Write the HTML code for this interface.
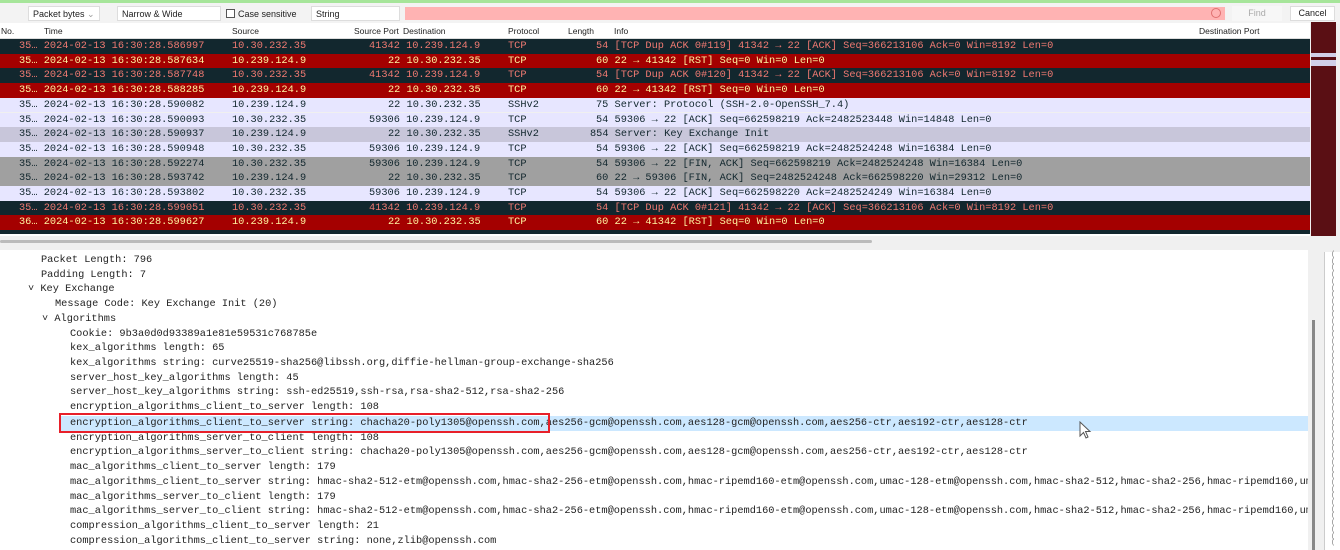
<!DOCTYPE html>
<html><head><meta charset="utf-8"><style>
*{margin:0;padding:0;box-sizing:border-box}
body{width:1340px;height:550px;overflow:hidden;background:#f0f0f0;font-family:"Liberation Sans",sans-serif;position:relative}
.mono{font-family:"Liberation Mono",monospace;font-size:10.3px}
.abs{position:absolute}
.sel{position:absolute;top:6px;height:15px;background:#fff;border:1px solid #ddd;font-size:9px;color:#222;padding:2px 4px;line-height:10px}
.row{position:absolute;left:0;width:1310px;height:14.7px;line-height:14.7px;white-space:pre}
.row span{position:absolute;top:0}
.d{background:#12272e;color:#f07a72}
.r{background:#a40000;color:#fff3a0}
.l{background:#e7e6ff;color:#12272e}
.s{background:#c8c6da;color:#12272e}
.g{background:#a0a0a0;color:#12272e}
.hd{position:absolute;top:25px;font-size:8.5px;color:#222}
.dl{position:absolute;white-space:pre;color:#222;height:14.7px;line-height:14.7px}
</style></head><body>
<div class="abs" style="left:0;top:0;width:1340px;height:3px;background:#a6e59a"></div>
<div class="abs" style="left:0;top:3px;width:1340px;height:21px;background:#f3f3f3"></div>
<div class="sel" style="left:28px;width:72px">Packet bytes <span style="color:#999">&#8964;</span></div>
<div class="sel" style="left:117px;width:104px">Narrow &amp; Wide</div>
<div class="abs" style="left:226px;top:9px;width:9px;height:9px;border:1px solid #555;background:#fff"></div>
<div class="abs" style="left:238px;top:9px;font-size:9px;color:#222">Case sensitive</div>
<div class="sel" style="left:311px;width:89px">String</div>
<div class="abs" style="left:405px;top:7px;width:820px;height:13px;background:#ffb3b3"></div>
<div class="abs" style="left:1211px;top:8px;width:10px;height:10px;border:1px solid #e07070;border-radius:50%"></div>
<div class="abs" style="left:1232px;top:6px;width:50px;height:15px;background:#f7f7f7;font-size:9px;color:#aaa;text-align:center;line-height:15px">Find</div>
<div class="abs" style="left:1290px;top:6px;width:45px;height:15px;background:#fff;border:1px solid #ddd;font-size:9px;color:#222;text-align:center;line-height:13px">Cancel</div>
<div class="abs" style="left:0;top:23px;width:1310px;height:16px;background:#fff;border-bottom:1px solid #ddd"></div>
<div class="hd" style="left:1px;top:26px">No.</div><div class="hd" style="left:44px;top:26px">Time</div><div class="hd" style="left:232px;top:26px">Source</div><div class="hd" style="left:354px;top:26px">Source Port</div><div class="hd" style="left:403px;top:26px">Destination</div><div class="hd" style="left:508px;top:26px">Protocol</div><div class="hd" style="left:568px;top:26px">Length</div><div class="hd" style="left:614px;top:26px">Info</div><div class="hd" style="left:1199px;top:26px">Destination Port</div>
<div class="mono">
<div class="row d" style="top:39px"><span style="left:19px">35… 2024-02-13 16:30:28.586997</span><span style="left:232px">10.30.232.35</span><span style="left:369px">41342 10.239.124.9</span><span style="left:508px">TCP</span><span style="left:596px">54 [TCP Dup ACK 0#119] 41342 → 22 [ACK] Seq=366213106 Ack=0 Win=8192 Len=0</span></div>
<div class="row r" style="top:53.7px"><span style="left:19px">35… 2024-02-13 16:30:28.587634</span><span style="left:232px">10.239.124.9</span><span style="left:388px">22 10.30.232.35</span><span style="left:508px">TCP</span><span style="left:596px">60 22 → 41342 [RST] Seq=0 Win=0 Len=0</span></div>
<div class="row d" style="top:68.4px"><span style="left:19px">35… 2024-02-13 16:30:28.587748</span><span style="left:232px">10.30.232.35</span><span style="left:369px">41342 10.239.124.9</span><span style="left:508px">TCP</span><span style="left:596px">54 [TCP Dup ACK 0#120] 41342 → 22 [ACK] Seq=366213106 Ack=0 Win=8192 Len=0</span></div>
<div class="row r" style="top:83.1px"><span style="left:19px">35… 2024-02-13 16:30:28.588285</span><span style="left:232px">10.239.124.9</span><span style="left:388px">22 10.30.232.35</span><span style="left:508px">TCP</span><span style="left:596px">60 22 → 41342 [RST] Seq=0 Win=0 Len=0</span></div>
<div class="row l" style="top:97.8px"><span style="left:19px">35… 2024-02-13 16:30:28.590082</span><span style="left:232px">10.239.124.9</span><span style="left:388px">22 10.30.232.35</span><span style="left:508px">SSHv2</span><span style="left:596px">75 Server: Protocol (SSH-2.0-OpenSSH_7.4)</span></div>
<div class="row l" style="top:112.5px"><span style="left:19px">35… 2024-02-13 16:30:28.590093</span><span style="left:232px">10.30.232.35</span><span style="left:369px">59306 10.239.124.9</span><span style="left:508px">TCP</span><span style="left:596px">54 59306 → 22 [ACK] Seq=662598219 Ack=2482523448 Win=14848 Len=0</span></div>
<div class="row s" style="top:127.2px"><span style="left:19px">35… 2024-02-13 16:30:28.590937</span><span style="left:232px">10.239.124.9</span><span style="left:388px">22 10.30.232.35</span><span style="left:508px">SSHv2</span><span style="left:590px">854 Server: Key Exchange Init</span></div>
<div class="row l" style="top:141.9px"><span style="left:19px">35… 2024-02-13 16:30:28.590948</span><span style="left:232px">10.30.232.35</span><span style="left:369px">59306 10.239.124.9</span><span style="left:508px">TCP</span><span style="left:596px">54 59306 → 22 [ACK] Seq=662598219 Ack=2482524248 Win=16384 Len=0</span></div>
<div class="row g" style="top:156.6px"><span style="left:19px">35… 2024-02-13 16:30:28.592274</span><span style="left:232px">10.30.232.35</span><span style="left:369px">59306 10.239.124.9</span><span style="left:508px">TCP</span><span style="left:596px">54 59306 → 22 [FIN, ACK] Seq=662598219 Ack=2482524248 Win=16384 Len=0</span></div>
<div class="row g" style="top:171.3px"><span style="left:19px">35… 2024-02-13 16:30:28.593742</span><span style="left:232px">10.239.124.9</span><span style="left:388px">22 10.30.232.35</span><span style="left:508px">TCP</span><span style="left:596px">60 22 → 59306 [FIN, ACK] Seq=2482524248 Ack=662598220 Win=29312 Len=0</span></div>
<div class="row l" style="top:186px"><span style="left:19px">35… 2024-02-13 16:30:28.593802</span><span style="left:232px">10.30.232.35</span><span style="left:369px">59306 10.239.124.9</span><span style="left:508px">TCP</span><span style="left:596px">54 59306 → 22 [ACK] Seq=662598220 Ack=2482524249 Win=16384 Len=0</span></div>
<div class="row d" style="top:200.7px"><span style="left:19px">35… 2024-02-13 16:30:28.599051</span><span style="left:232px">10.30.232.35</span><span style="left:369px">41342 10.239.124.9</span><span style="left:508px">TCP</span><span style="left:596px">54 [TCP Dup ACK 0#121] 41342 → 22 [ACK] Seq=366213106 Ack=0 Win=8192 Len=0</span></div>
<div class="row r" style="top:215.4px"><span style="left:19px">36… 2024-02-13 16:30:28.599627</span><span style="left:232px">10.239.124.9</span><span style="left:388px">22 10.30.232.35</span><span style="left:508px">TCP</span><span style="left:596px">60 22 → 41342 [RST] Seq=0 Win=0 Len=0</span></div>
<div class="row d" style="top:230.1px;height:4px"></div>
</div>
<div class="abs" style="left:1311px;top:22px;width:25px;height:214px;background:#5a0f14"></div>
<div class="abs" style="left:1311px;top:53px;width:25px;height:4px;background:#d0d0e8"></div>
<div class="abs" style="left:1311px;top:60px;width:25px;height:6px;background:#d0d0e8"></div>
<div class="abs" style="left:0;top:234px;width:1310px;height:2px;background:#fff"></div>
<div class="abs" style="left:0;top:240px;width:872px;height:3px;background:#bbb;border-radius:2px"></div>
<div class="abs" style="left:0;top:250px;width:1320px;height:300px;background:#fff"></div>
<div class="abs" style="left:1308px;top:250px;width:12px;height:300px;background:#f0f0f0"></div>
<div class="abs" style="left:1312px;top:320px;width:3px;height:230px;background:#888"></div>
<div class="abs" style="left:1324px;top:252px;width:16px;height:298px;background:#fff;border-left:1px solid #ccc;font-family:'Liberation Mono',monospace;font-size:7px;color:#777;line-height:6.7px;padding-left:6px;white-space:pre">(
(
(
(
(
(
(
(
(
(
(
(
(
(
(
(
(
(
(
(
(
(
(
(
(
(
(
(
(
(
(
(
(
(
(
(
(
(
(
(
(
(
(
(</div>
<div class="abs" style="left:59px;top:416px;width:1249px;height:15px;background:#cce8ff"></div>
<div class="mono">
<div class="dl" style="left:41px;top:253px">Packet Length: 796</div>
<div class="dl" style="left:41px;top:267.7px">Padding Length: 7</div>
<div class="dl" style="left:28px;top:282.4px">˅ Key Exchange</div>
<div class="dl" style="left:55px;top:297.1px">Message Code: Key Exchange Init (20)</div>
<div class="dl" style="left:42px;top:311.8px">˅ Algorithms</div>
<div class="dl" style="left:70px;top:326.5px">Cookie: 9b3a0d0d93389a1e81e59531c768785e</div>
<div class="dl" style="left:70px;top:341.2px">kex_algorithms length: 65</div>
<div class="dl" style="left:70px;top:355.9px">kex_algorithms string: curve25519-sha256@libssh.org,diffie-hellman-group-exchange-sha256</div>
<div class="dl" style="left:70px;top:370.6px">server_host_key_algorithms length: 45</div>
<div class="dl" style="left:70px;top:385.3px">server_host_key_algorithms string: ssh-ed25519,ssh-rsa,rsa-sha2-512,rsa-sha2-256</div>
<div class="dl" style="left:70px;top:400px">encryption_algorithms_client_to_server length: 108</div>
<div class="dl" style="left:70px;top:416px">encryption_algorithms_client_to_server string: chacha20-poly1305@openssh.com,aes256-gcm@openssh.com,aes128-gcm@openssh.com,aes256-ctr,aes192-ctr,aes128-ctr</div>
<div class="dl" style="left:70px;top:430.7px">encryption_algorithms_server_to_client length: 108</div>
<div class="dl" style="left:70px;top:445.4px">encryption_algorithms_server_to_client string: chacha20-poly1305@openssh.com,aes256-gcm@openssh.com,aes128-gcm@openssh.com,aes256-ctr,aes192-ctr,aes128-ctr</div>
<div class="dl" style="left:70px;top:460.1px">mac_algorithms_client_to_server length: 179</div>
<div class="dl" style="left:70px;top:474.8px;width:1238px;overflow:hidden">mac_algorithms_client_to_server string: hmac-sha2-512-etm@openssh.com,hmac-sha2-256-etm@openssh.com,hmac-ripemd160-etm@openssh.com,umac-128-etm@openssh.com,hmac-sha2-512,hmac-sha2-256,hmac-ripemd160,umac</div>
<div class="dl" style="left:70px;top:489.5px">mac_algorithms_server_to_client length: 179</div>
<div class="dl" style="left:70px;top:504.2px;width:1238px;overflow:hidden">mac_algorithms_server_to_client string: hmac-sha2-512-etm@openssh.com,hmac-sha2-256-etm@openssh.com,hmac-ripemd160-etm@openssh.com,umac-128-etm@openssh.com,hmac-sha2-512,hmac-sha2-256,hmac-ripemd160,umac</div>
<div class="dl" style="left:70px;top:518.9px">compression_algorithms_client_to_server length: 21</div>
<div class="dl" style="left:70px;top:533.6px">compression_algorithms_client_to_server string: none,zlib@openssh.com</div>
</div>
<div class="abs" style="left:59px;top:413px;width:491px;height:20px;border:2px solid #e8202a"></div>
<svg class="abs" style="left:1079px;top:421px" width="14" height="20" viewBox="0 0 14 20"><path d="M1 1 L1 15 L4.5 11.5 L7 17 L9 16 L6.5 10.5 L11 10.5 Z" fill="#fff" stroke="#555" stroke-width="1"/></svg>
</body></html>
